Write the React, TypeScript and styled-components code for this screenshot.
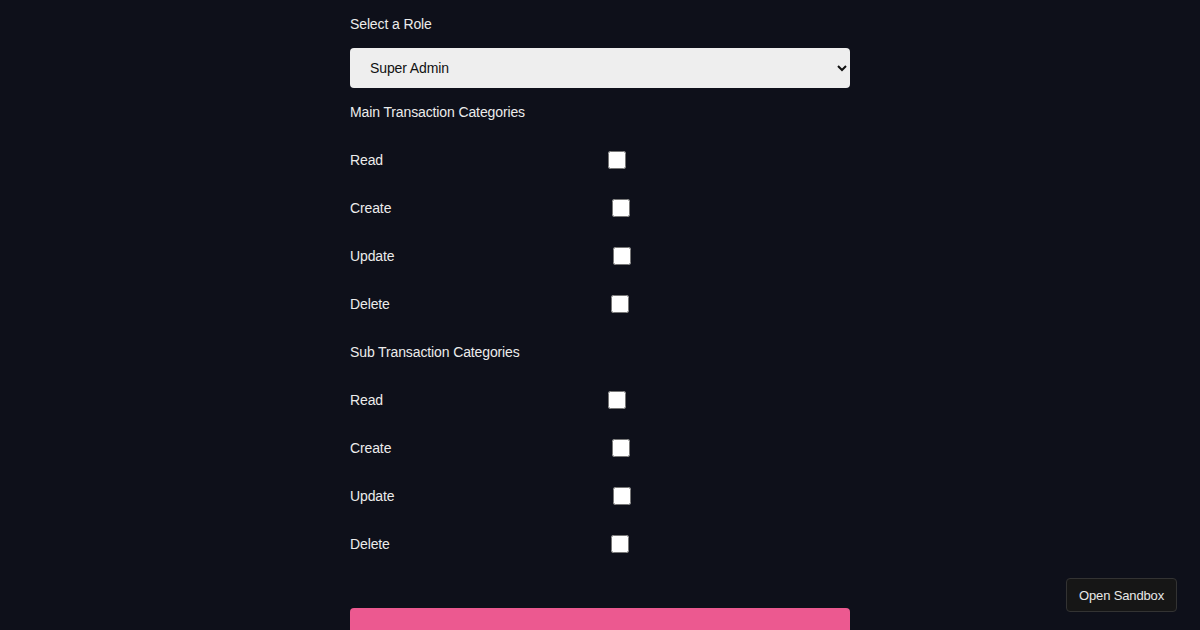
import React from "react";
import styled, { createGlobalStyle } from "styled-components";

const Global = createGlobalStyle`
  html, body { margin: 0; padding: 0; background: #0e101a; }
  body { font-family: "Liberation Sans", Arial, sans-serif; color: #ececec; }
`;

const Page = styled.div`
  min-height: 630px;
  background: #0e101a;
`;

const Form = styled.form`
  width: 500px;
  margin: 0 auto;
  display: flex;
  flex-direction: column;
`;

const Heading = styled.div`
  height: 48px;
  display: flex;
  align-items: center;
  font-size: 14px;
  letter-spacing: -0.12px;
  color: #ececec;
`;

const Select = styled.select`
  height: 40px;
  width: 100%;
  border: none;
  border-radius: 4px;
  background: #eeeeee;
  color: #111;
  font-family: "Liberation Sans", Arial, sans-serif;
  font-size: 14px;
  letter-spacing: -0.12px;
  padding: 0 12px 0 16px;
  outline: none;
`;

const Row = styled.label`
  height: 48px;
  display: flex;
  align-items: center;
  font-size: 14px;
  letter-spacing: -0.12px;
  color: #ececec;
`;

const Check = styled.input`
  width: 18px;
  height: 18px;
  margin: 0 auto;
`;

const Submit = styled.button`
  margin-top: 40px;
  height: 48px;
  border: none;
  border-radius: 4px;
  background: #ec5990;
`;

const Sandbox = styled.button`
  position: fixed;
  right: 23px;
  bottom: 18px;
  height: 34px;
  padding: 0 12px;
  background: #161616;
  color: #e8e8e8;
  border: 1px solid #333333;
  border-radius: 4px;
  font-family: "Liberation Sans", Arial, sans-serif;
  font-size: 13px;
  letter-spacing: -0.15px;
`;

const perms = ["Read", "Create", "Update", "Delete"];

function Group({ title }: { title: string }) {
  return (
    <>
      <Heading>{title}</Heading>
      {perms.map((p) => (
        <Row key={p}>
          {p}
          <Check type="checkbox" />
        </Row>
      ))}
    </>
  );
}

export default function App() {
  return (
    <Page>
      <Global />
      <Form onSubmit={(e) => e.preventDefault()}>
        <Heading>Select a Role</Heading>
        <Select defaultValue="super">
          <option value="super">Super Admin</option>
          <option value="admin">Admin</option>
          <option value="user">User</option>
        </Select>
        <Group title="Main Transaction Categories" />
        <Group title="Sub Transaction Categories" />
        <Submit type="submit" />
      </Form>
      <Sandbox type="button">Open Sandbox</Sandbox>
    </Page>
  );
}
